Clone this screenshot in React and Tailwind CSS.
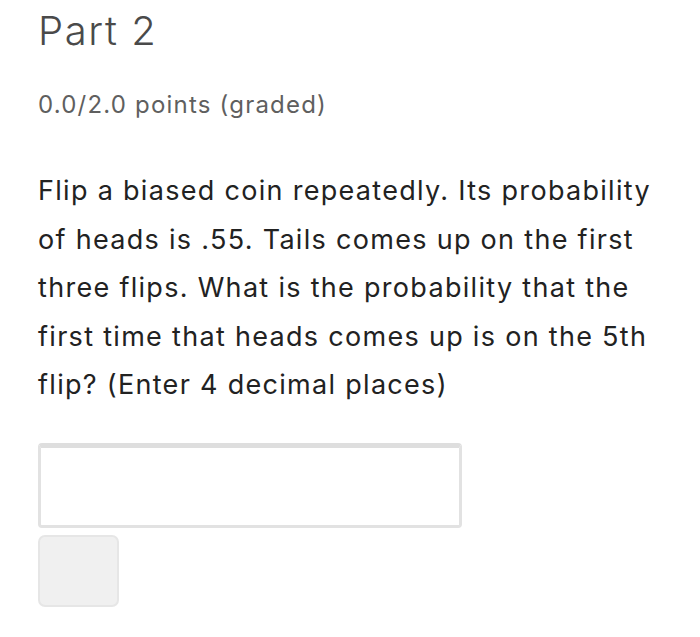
export default function App() {
  return (
    <div className="w-[700px] h-[637px] bg-white overflow-hidden pl-[38px] font-['Inter',sans-serif]">
      <h1 className="pt-[7px] text-[40px] leading-[48px] font-light tracking-[1.6px] text-[#4a4a4a]">
        <span>Part 2</span>
      </h1>
      <div className="mt-[34px] text-[24px] leading-[32px] tracking-[1.2px] text-[#5f5f5f]">
        <span>0.0/2.0 points (graded)</span>
      </div>
      <p className="mt-[46px] w-[662px] text-[27px] leading-[48.5px] tracking-[1.3px] text-[#222222]">
        <span className="block whitespace-nowrap">Flip a biased coin repeatedly. Its probability</span>
        <span className="block whitespace-nowrap">of heads is .55. Tails comes up on the first</span>
        <span className="block whitespace-nowrap">three flips. What is the probability that the</span>
        <span className="block whitespace-nowrap">first time that heads comes up is on the 5th</span>
        <span className="block whitespace-nowrap">flip? (Enter 4 decimal places)</span>
      </p>
      <div className="mt-[33px] w-[424px] h-[85px] rounded-[4px] border-[3px] border-[#e2e2e2] border-t-[5px] border-t-[#dedede] bg-white" />
      <div className="mt-[7px] w-[81px] h-[72px] rounded-[7px] border-[2px] border-[#e6e6e6] bg-[#f0f0f0]" />
    </div>
  );
}
